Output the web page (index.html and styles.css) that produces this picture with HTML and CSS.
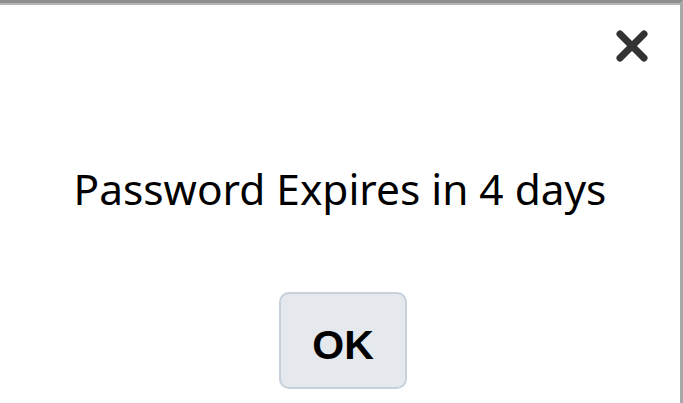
FILE: index.html
```html
<!DOCTYPE html>
<html lang="en">
<head>
    <meta charset="UTF-8">
    <title>Password Expiry</title>
    <link rel="stylesheet" href="styles.css">
</head>
<body>

<div class="dialog">
    <div class="dialog-header">
        <button class="close-btn" aria-label="Close">
            <svg width="34" height="34" viewBox="0 0 34 34">
                <path d="M5 5 L29 29 M29 5 L5 29" stroke="#333" stroke-width="7" stroke-linecap="round"/>
            </svg>
        </button>
    </div>
    <div class="dialog-body">
        <p class="message">Password Expires in 4 days</p>
    </div>
    <div class="dialog-footer">
        <button class="ok-btn">OK</button>
    </div>
</div>

</body>
</html>
```

FILE: styles.css
```css
html, body {
    margin: 0;
    padding: 0;
    background: #ffffff;
}
.dialog {
    box-sizing: border-box;
    height: 403px;
    border-top: 3px solid #8e8e8e;
    border-right: 3px solid #a9a9a9;
    box-shadow: inset 0 2px 0 #b4b4b4;
    font-family: "Noto Sans", "Open Sans", sans-serif;
    color: #000;
}
.dialog-header {
    display: flex;
    justify-content: flex-end;
    padding: 26px 31px 0 0;
}
.close-btn {
    background: none;
    border: none;
    padding: 0;
    width: 34px;
    height: 34px;
    cursor: pointer;
    filter: blur(0.6px);
}
.dialog-body {
    padding-top: 102px;
    text-align: center;
}
.message {
    margin: 0;
    font-size: 42.4px;
    line-height: 48px;
}
.dialog-footer {
    display: flex;
    justify-content: center;
    padding: 79px 0 0 6px;
}
.ok-btn {
    box-sizing: border-box;
    width: 128px;
    height: 97px;
    padding: 10px 0 0;
    background: #e5e8ec;
    border: 2px solid #c6d1db;
    border-radius: 10px;
    font-family: "Liberation Sans", Arial, sans-serif;
    font-weight: bold;
    font-size: 41px;
    color: #000;
    cursor: pointer;
}
```
